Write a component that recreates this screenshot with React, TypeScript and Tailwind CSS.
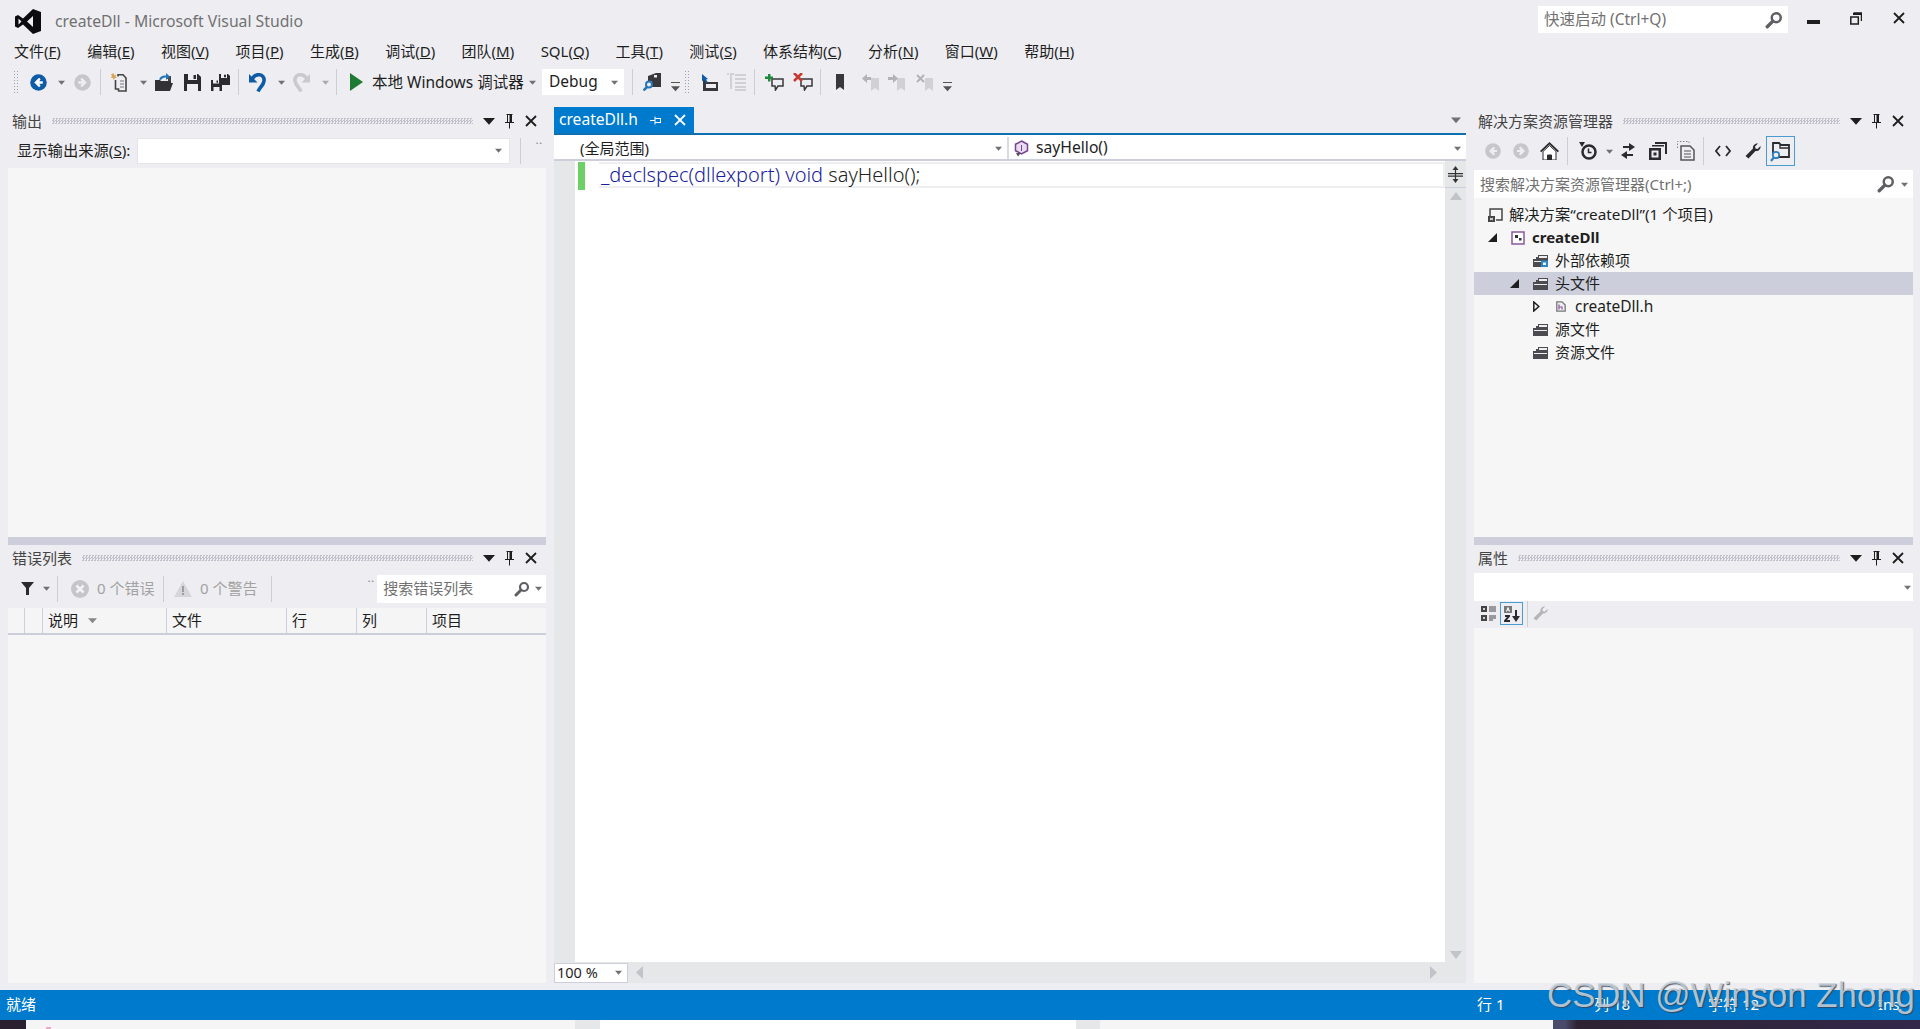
import React from "react";

const Tri = ({ className = "", color = "#717171", size = 7 }: { className?: string; color?: string; size?: number }) => (
  <svg className={className} width={size} height={size} viewBox="0 0 8 8">
    <path d="M0 2h8L4 6.500z" fill={color} />
  </svg>
);

const Grip = ({ className = "" }: { className?: string }) => (
  <div className={`bg-[radial-gradient(circle,#a0a0ac_0.8px,transparent_1px)] bg-size-[3px_3px] ${className}`} />
);

const HeaderGrip = ({ className = "" }: { className?: string }) => (
  <div className={`bg-[conic-gradient(#c0c0ca_25%,transparent_0_50%,#c0c0ca_0_75%,transparent_0)] bg-size-[3px_3px] ${className}`} />
);

const Sep = ({ className = "" }: { className?: string }) => <div className={`w-px h-[26px] bg-[#ccced4] shrink-0 ${className}`} />;

const Overflow = ({ className = "" }: { className?: string }) => (
  <div className={`mt-[10px] w-[9px] flex flex-col items-center gap-[1px] ${className}`}>
    <div className="w-[9px] h-px bg-[#555]" />
    <Tri size={9} color="#555" />
  </div>
);

const Arrow = ({ dir, off, size = 17, className = "" }: { dir: "l" | "r"; off?: boolean; size?: number; className?: string }) => (
  <svg className={className} width={size} height={size} viewBox="0 0 16 16">
    <circle cx="8" cy="8" r="7.800" fill={off ? "#c6c6cb" : "#0e5ba6"} />
    {dir === "l" ? (
      <path d="M8.500 3.500 4 8l4.500 4.500 1.500-1.500L8.700 9.100H12V6.900H8.700L10 5z" fill={off ? "#eeeef2" : "#fff"} />
    ) : (
      <path d="M7.500 3.500 12 8l-4.500 4.500L6 11l1.300-1.900H4V6.900h3.300L6 5z" fill={off ? "#eeeef2" : "#fff"} />
    )}
  </svg>
);

const Mag = ({ className = "", color = "#5f5f63", size = 18 }: { className?: string; color?: string; size?: number }) => (
  <svg className={className} width={size} height={size} viewBox="0 0 16 16">
    <circle cx="10" cy="6" r="4" fill="none" stroke={color} strokeWidth="2.200" />
    <path d="M7 9 2 14" stroke={color} strokeWidth="3" strokeLinecap="round" />
  </svg>
);

const Pin = ({ className = "" }: { className?: string }) => (
  <svg className={className} width="11" height="16" viewBox="0 0 11 16">
    <path d="M2.500 1h6v1H8v7h2v1H1V9h2V2h-.5zM4 2v7h1.500V2zM5 10h1v5.500H5z" fill="#1e1e1e" />
  </svg>
);

const Close = ({ className = "", color = "#1e1e1e", size = 12 }: { className?: string; color?: string; size?: number }) => (
  <svg className={className} width={size} height={size} viewBox="0 0 12 12">
    <path d="M1 1l10 10M11 1 1 11" stroke={color} strokeWidth="1.800" />
  </svg>
);

const Folder = ({ badge }: { badge?: boolean }) => (
  <svg width="16" height="14" viewBox="0 0 16 14" className="shrink-0">
    <path d="M0 5h3V3h2V1h10v12H0z" fill="#4b4b50" />
    <path d="M1 7h13v1H1zM6 2h8v2H6z" fill="#eeeef2" />
    {badge && <path d="M8 6.500h7V13H8z" fill="#2f86c4" />}
    {badge && <path d="M10 8.500h3V11h-3z" fill="#e8f3fb" />}
  </svg>
);

const GrayBookmark = ({ kind, className = "" }: { kind: "prev" | "next" | "clear"; className?: string }) => (
  <svg className={className} width="18" height="17" viewBox="0 0 18 17">
    <path d="M9 4h8v13l-4-3-4 3z" fill="#d0d0d5" />
    {kind === "prev" && <path d="M5 0 0 4.500 5 9V6h4V3H5z" fill="#b2b2b8" />}
    {kind === "next" && <path d="M5 0l5 4.500L5 9V6H0V3h5z" fill="#b2b2b8" />}
    {kind === "clear" && <path d="M1 1l7 7M8 1 1 8" stroke="#b2b2b8" strokeWidth="2" />}
  </svg>
);

function PanelHeader({ title, className = "" }: { title: string; className?: string }) {
  return (
    <div className={`h-[28px] flex items-center shrink-0 ${className}`}>
      <span className="ml-[4px] text-[15px] text-[#444] leading-none">{title}</span>
      <HeaderGrip className="flex-1 h-[6px] ml-[10px]" />
      <Tri className="ml-[10px]" color="#1e1e1e" size={12} />
      <Pin className="ml-[9px]" />
      <Close className="ml-[10px] mr-[9px]" />
    </div>
  );
}

const menus: [string, string][] = [
  ["文件", "F"],
  ["编辑", "E"],
  ["视图", "V"],
  ["项目", "P"],
  ["生成", "B"],
  ["调试", "D"],
  ["团队", "M"],
  ["SQL", "Q"],
  ["工具", "T"],
  ["测试", "S"],
  ["体系结构", "C"],
  ["分析", "N"],
  ["窗口", "W"],
  ["帮助", "H"],
];

function TitleBar() {
  return (
    <div className="h-[40px] flex items-start shrink-0">
      <svg className="ml-[15px] mt-[9px]" width="26" height="25" viewBox="0 0 26 25">
        <path
          fillRule="evenodd"
          d="M18 0 26 3v19l-8 3L8 15.500 3 19 0 17.500v-10L3 6l5 3.500zM18 7l-6 5.500 6 5.500zM3.500 9.500v6l3-3z"
          fill="#0c0c10"
        />
      </svg>
      <span className="ml-[14px] mt-[11px] text-[15.750px] leading-[20px] text-[#717171]">createDll - Microsoft Visual Studio</span>
      <div className="ml-auto mt-[6px] w-[250px] h-[27px] bg-white flex items-center px-[6px] justify-between">
        <span className="text-[15.500px] text-[#717171]">快速启动 (Ctrl+Q)</span>
        <Mag className="-mr-[1px]" />
      </div>
      <svg className="ml-[19px] mt-[20px]" width="13" height="4"><rect width="13" height="4" fill="#1e1e1e" /></svg>
      <svg className="ml-[30px] mt-[12px]" width="12" height="13" viewBox="0 0 12 13">
        <path d="M3.500 1h8v8" fill="none" stroke="#1e1e1e" strokeWidth="1.500" />
        <path d="M3 1h8.500v2H3z" fill="#1e1e1e" />
        <path d="M.8 5h7.500v7H.8z" fill="none" stroke="#1e1e1e" strokeWidth="1.500" />
      </svg>
      <Close className="ml-[31px] mt-[12px] mr-[15px]" />
    </div>
  );
}

function MenuBar() {
  return (
    <div className="h-[24px] pb-[2px] flex items-center gap-[26.400px] pl-[14px] shrink-0 text-[15px] text-[#1e1e1e]">
      {menus.map(([label, key]) => (
        <span key={label} className="whitespace-nowrap">
          {label}(<span className="underline">{key}</span>)
        </span>
      ))}
    </div>
  );
}

function MainToolbar() {
  return (
    <div className="h-[43px] pb-[7px] flex items-center shrink-0">
      <Grip className="ml-[13px] w-[7px] h-[24px]" />
      <Arrow dir="l" className="ml-[10px]" />
      <Tri className="ml-[11px]" />
      <Arrow dir="r" off className="ml-[9px]" />
      <Sep className="ml-[9px]" />
      {/* new project */}
      <svg className="ml-[9px]" width="17" height="19" viewBox="0 0 17 19">
        <path d="M7 2h6l4 4v13H7v-3H4V6h3z" fill="#eeeef2" />
        <path d="M8 3.500V1.700h5L16 5v13H8.500M5.500 7v9h3v2.500" fill="none" stroke="#444" strokeWidth="1.600" />
        <path d="M3.500 0l.8 2.200L6.500 1.500 5.500 3.500 7 5 5 5.200 3.500 7 3 5 .5 5 2 3.500 1 1.500z" fill="#d9a75b" />
        <path d="M10 8h4M10 11h4M10 14h4" stroke="#777" />
      </svg>
      <Tri className="ml-[13px]" />
      {/* open */}
      <svg className="ml-[8px]" width="18" height="18" viewBox="0 0 18 18">
        <path d="M0 7h5l1 1h10v2h2l-3 8H0z" fill="#323236" />
        <path d="M12 3h4v5h-3v-2h-1z" fill="#444" />
        <path d="M4 6.500C5 3 8 2 11 2.500V0l4 3.500-4 3.500V4.500C9 4.200 7 5 6 7z" fill="#2677b8" />
      </svg>
      {/* save */}
      <svg className="ml-[11px]" width="17" height="17" viewBox="0 0 17 17">
        <path d="M0 0h14l3 3v14H0z" fill="#2b2b2f" />
        <path d="M4 0h9v6H4zM3 10h11v7H3z" fill="#eeeef2" />
        <path d="M9.500 1h2.500v4H9.500z" fill="#2b2b2f" />
      </svg>
      {/* save all */}
      <svg className="ml-[10px]" width="19" height="17" viewBox="0 0 19 17">
        <path d="M8 0h9l2 2v9H8z" fill="#2b2b2f" />
        <path d="M0 6h9l2 2v9H0z" fill="#2b2b2f" />
        <path d="M10 0h6v4h-6zM2 6h6v3.500H2zM2.500 13h6v4h-6z" fill="#eeeef2" />
        <path d="M13 .7h2v2.600h-2zM5.500 6.500h1.500v2.300H5.500z" fill="#2b2b2f" />
      </svg>
      <Sep className="ml-[8px]" />
      {/* undo */}
      <svg className="ml-[10px]" width="17" height="19" viewBox="0 0 17 19">
        <path d="M3 6.500C6-.5 16 .5 15 8c-.6 4.500-4 6-6 10.500" fill="none" stroke="#0e5ba6" strokeWidth="3.600" />
        <path d="M0 1v8.500h8.500z" fill="#0e5ba6" />
      </svg>
      <Tri className="ml-[12px]" />
      {/* redo */}
      <svg className="ml-[8px]" width="17" height="19" viewBox="0 0 17 19">
        <path d="M14 6.500C11-.5 1 .5 2 8c.6 4.500 4 6 6 10.500" fill="none" stroke="#c9c9ce" strokeWidth="3.600" />
        <path d="M17 1v8.500H8.500z" fill="#c9c9ce" />
      </svg>
      <Tri className="ml-[12px]" color="#a8a8ae" />
      <Sep className="ml-[7px]" />
      <svg className="ml-[13px]" width="13" height="18" viewBox="0 0 13 18"><path d="M0 0l13 9-13 9z" fill="#1f7a34" /></svg>
      <span className="ml-[9px] pt-[1px] w-[152px] text-[15.500px] text-[#1e1e1e] whitespace-nowrap">本地 Windows 调试器</span>
      <Tri className="ml-[5px]" />
      <div className="ml-[6px] w-[82px] h-[26px] bg-white flex items-center justify-between pl-[7px] pr-[6px] shrink-0">
        <span className="text-[15.500px] text-[#1e1e1e]">Debug</span>
        <Tri />
      </div>
      <Sep className="ml-[8px]" />
      {/* find in files style */}
      <svg className="ml-[10px]" width="18" height="18" viewBox="0 0 18 18">
        <path d="M5 5V3l8-3h5v14H9V8H5z" fill="#38383c" />
        <path d="M11 2h3v2.500h-3z" fill="#eeeef2" />
        <circle cx="6" cy="11.500" r="3" fill="#eeeef2" stroke="#2677b8" strokeWidth="2" />
        <path d="M4 14l-3.500 3.500" stroke="#2677b8" strokeWidth="2.500" />
      </svg>
      <Overflow className="ml-[10px]" />
      <Grip className="ml-[4px] w-[7px] h-[24px]" />
      <svg className="ml-[9px]" width="18" height="17" viewBox="0 0 18 17">
        <path d="M3 5h3v3h12v9H3z" fill="#38383c" />
        <path d="M6 10h10v4H6z" fill="#eeeef2" />
        <path d="M2 0l6 5-2 .5 2 3-2 .5-1.500-3L2 7z" fill="#0e5ba6" />
      </svg>
      <svg className="ml-[9px]" width="19" height="18" viewBox="0 0 19 18">
        <path d="M0 0h2v2H0zM3 0h4v2H3zM3 2h2v14H3zM8 1h11v2H8zM8 5h11v2H8zM8 9h11v2H8zM8 13h11v2H8zM8 16h11v2H8z" fill="#d0d0d5" />
      </svg>
      <Sep className="ml-[8px]" />
      {/* add comment */}
      <svg className="ml-[10px]" width="19" height="17" viewBox="0 0 19 17">
        <path d="M7 5h11v7h-5l-2.500 4-.5-4H7z" fill="none" stroke="#38383c" strokeWidth="1.500" />
        <path d="M3 0h2.500v2.500H8V5H5.500v2.500H3V5H0V2.500h3z" fill="#1f8a3c" />
      </svg>
      <svg className="ml-[9px]" width="20" height="18" viewBox="0 0 20 18">
        <path d="M8 6h11v7h-5l-2.500 4-.5-4H8z" fill="none" stroke="#38383c" strokeWidth="1.500" />
        <path d="M1 0l8 8M9 0 1 8" stroke="#c43a31" strokeWidth="2.500" />
      </svg>
      <Sep className="ml-[7px]" />
      <svg className="ml-[15px]" width="8" height="16" viewBox="0 0 8 16"><path d="M0 0h8v16l-4-3-4 3z" fill="#38383c" /></svg>
      <GrayBookmark kind="prev" className="ml-[18px]" />
      <GrayBookmark kind="next" className="ml-[8px]" />
      <GrayBookmark kind="clear" className="ml-[10px]" />
      <Overflow className="ml-[9px]" />
    </div>
  );
}

function LeftColumn() {
  return (
    <div className="w-[538px] ml-[8px] flex flex-col shrink-0">
      <PanelHeader title="输出" />
      <div className="h-[33px] pb-[2px] flex items-center shrink-0">
        <span className="ml-[9px] w-[120px] text-[15.300px] text-[#1e1e1e] whitespace-nowrap">
          显示输出来源(<span className="underline">S</span>):
        </span>
        <div className="w-[373px] h-[26px] bg-white border border-[#e4e4ea] flex items-center justify-end pr-[7px]">
          <Tri />
        </div>
        <Sep className="ml-[10px] h-[22px]" />
        <div className="ml-[15px] mb-[14px] text-[7px] leading-none text-[#888] tracking-[1px]">‣‣</div>
      </div>
      <div className="h-[369px] bg-[#f6f6f6] shrink-0" />
      <div className="h-[8px] bg-[#cccedb] shrink-0" />
      <PanelHeader title="错误列表" className="pb-[2px]" />
      <div className="h-[35px] pb-[4px] flex items-center shrink-0">
        <svg className="ml-[13px]" width="13" height="13" viewBox="0 0 13 13"><path d="M0 0h13L8 6v7H5V6z" fill="#2b2b2f" /></svg>
        <Tri className="ml-[9px]" />
        <Sep className="ml-[7px]" />
        <svg className="ml-[13px]" width="18" height="18" viewBox="0 0 18 18">
          <circle cx="9" cy="9" r="9" fill="#c5c5ca" />
          <path d="M5.500 5.500l7 7M12.500 5.500l-7 7" stroke="#f4f4f6" strokeWidth="2.500" />
        </svg>
        <span className="ml-[8px] text-[15px] text-[#a2a2a2] whitespace-nowrap w-[60px]">0 个错误</span>
        <Sep className="ml-[6px]" />
        <svg className="ml-[10px]" width="18" height="16" viewBox="0 0 18 16">
          <path d="M9 0l9 16H0z" fill="#d5d5da" />
          <path d="M8 5h2v6H8zM8 12h2v2H8z" fill="#9c9ca2" />
        </svg>
        <span className="ml-[8px] text-[15px] text-[#a2a2a2] whitespace-nowrap w-[60px]">0 个警告</span>
        <Sep className="ml-[11px]" />
        <div className="ml-[96px] mb-[14px] text-[7px] leading-none text-[#888] tracking-[1px]">‣‣</div>
        <div className="ml-[2px] flex-1 h-[28px] bg-white flex items-center pl-[6px] pr-[4px]">
          <span className="text-[15px] text-[#717171]">搜索错误列表</span>
          <Mag className="ml-auto" size={16} />
          <Tri className="ml-[5px]" />
        </div>
      </div>
      <div className="h-[27px] flex bg-[#f5f5f5] border-b-2 border-[#cccedb] shrink-0 text-[15px] text-[#1e1e1e] items-stretch">
        <div className="w-[17px] border-r border-[#cccedb]" />
        <div className="w-[18px] border-r border-[#cccedb]" />
        <div className="w-[124px] border-r border-[#cccedb] pl-[5px] flex items-center gap-[10px]">
          说明 <Tri color="#888" size={9} />
        </div>
        <div className="w-[120px] border-r border-[#cccedb] pl-[5px] flex items-center">文件</div>
        <div className="w-[70px] border-r border-[#cccedb] pl-[5px] flex items-center">行</div>
        <div className="w-[70px] border-r border-[#cccedb] pl-[5px] flex items-center">列</div>
        <div className="flex-1 pl-[5px] flex items-center">项目</div>
      </div>
      <div className="flex-1 bg-[#f6f6f6]" />
    </div>
  );
}

function Editor() {
  return (
    <div className="w-[912px] ml-[8px] flex flex-col shrink-0">
      <div className="h-[26px] flex items-stretch shrink-0">
        <div className="w-[140px] bg-[#007acc] flex items-center text-white pl-[5px]">
          <span className="text-[15.600px]">createDll.h</span>
          <svg className="ml-[12px]" width="12" height="11" viewBox="0 0 12 11">
            <path d="M0 5h4.500v1H0zM4.500 1.500h1V3H11v5H5.500v1.500h-1zM5.500 4v3h4.500V4z" fill="#fff" />
          </svg>
          <Close className="ml-[12px]" color="#fff" />
        </div>
        <Tri className="ml-auto mr-[5px] self-center" size={10} />
      </div>
      <div className="h-[2px] bg-[#0e70b0] shrink-0" />
      <div className="h-[26px] pt-[2px] flex bg-white border-b-2 border-[#cccedb] shrink-0 text-[15px] text-[#1e1e1e]">
        <div className="w-[455px] border-r-2 border-[#d8dae4] flex items-center pl-[26px] pr-[5px]">
          <span>(全局范围)</span>
          <Tri className="ml-auto" />
        </div>
        <div className="flex-1 flex items-center pl-[5px] pr-[5px]">
          <svg width="15" height="17" viewBox="0 0 15 17">
            <path d="M7.500 1l6 3.300v6.400l-6 3.300-6-3.300V4.300z" fill="#e9dcf1" stroke="#75438f" strokeWidth="1.500" />
            <path d="M7.500 5v6" stroke="#75438f" />
            <path d="M2 13h4v1l-2 2.500z" fill="#555" />
          </svg>
          <span className="ml-[7px] text-[15.700px]">sayHello()</span>
          <Tri className="ml-auto" />
        </div>
      </div>
      <div className="flex-1 flex min-h-0">
        <div className="w-[21px] bg-[#e6e7e8]" />
        <div className="flex-1 bg-white pt-px">
          <div className="flex items-start">
            <div className="ml-[3px] w-[7px] h-[28px] bg-[#6fd068] shrink-0" />
            <div className="ml-[14px] flex-1 h-[26px] border-2 border-l-0 border-[#eeeef2] flex items-center pl-[2px]">
              <span className="text-[20px] leading-none font-light text-[#1c1ca0]">
                _declspec(dllexport) void <span className="text-[#222]">sayHello();</span>
              </span>
            </div>
          </div>
        </div>
        <div className="w-[21px] bg-[#e6e7e8] flex flex-col items-center">
          <div className="w-full h-[27px] border-b border-[#cccedb] flex items-center justify-center">
            <svg width="15" height="17" viewBox="0 0 15 17">
              <path d="M7.500 0 10.500 4h-6zM7.500 17l-3-4h6zM6.900 3h1.200v11H6.900zM0 7h15v1.200H0zM0 9.500h15v1.200H0z" fill="#333" />
            </svg>
          </div>
          <svg className="mt-[4px]" width="12" height="8" viewBox="0 0 12 8"><path d="M6 0l6 8H0z" fill="#c2c3c9" /></svg>
          <svg className="mt-auto mb-[3px]" width="12" height="8" viewBox="0 0 12 8"><path d="M6 8l6-8H0z" fill="#c2c3c9" /></svg>
        </div>
      </div>
      <div className="h-[21px] flex items-center bg-[#e6e7e8] shrink-0">
        <div className="w-[74px] h-[20px] bg-white border border-[#cccedb] flex items-center justify-between pl-[2px] pr-[5px] text-[14.500px] text-[#1e1e1e]">
          100 %
          <Tri />
        </div>
        <svg className="ml-[8px]" width="7" height="13" viewBox="0 0 7 13"><path d="M0 6.500 7 0v13z" fill="#c2c3c9" /></svg>
        <svg className="ml-auto mr-[29px]" width="7" height="13" viewBox="0 0 7 13"><path d="M7 6.500 0 0v13z" fill="#c2c3c9" /></svg>
      </div>
    </div>
  );
}

function TreeRow({ indent, selected, arrow, icon, bold, children }: { indent: string; selected?: boolean; arrow?: "open" | "closed"; icon?: React.ReactNode; bold?: boolean; children: React.ReactNode }) {
  return (
    <div className={`h-[23px] flex items-center text-[15px] text-[#1e1e1e] ${selected ? "bg-[#cccedb]" : ""}`}>
      <div className={`${indent} ${arrow ? "w-[23px]" : ""} flex items-center shrink-0`}>
        {arrow === "open" && (
          <svg width="9" height="9" viewBox="0 0 9 9"><path d="M9 0v9H0z" fill="#1e1e1e" /></svg>
        )}
        {arrow === "closed" && (
          <svg width="7" height="11" viewBox="0 0 7 11"><path d="M.8 1v9l5-4.500z" fill="none" stroke="#1e1e1e" strokeWidth="1.500" /></svg>
        )}
      </div>
      {icon}
      <span className={`ml-[6px] whitespace-nowrap ${bold ? "font-bold" : ""}`}>{children}</span>
    </div>
  );
}

function RightColumn() {
  return (
    <div className="w-[439px] ml-[8px] flex flex-col shrink-0">
      <PanelHeader title="解决方案资源管理器" />
      <div className="h-[35px] pb-[3px] flex items-center shrink-0">
        <Arrow dir="l" off size={16} className="ml-[11px]" />
        <Arrow dir="r" off size={16} className="ml-[12px]" />
        <svg className="ml-[11px]" width="19" height="18" viewBox="0 0 19 18">
          <path d="M9.500 0 19 9l-1.300 1.300L9.500 2.500 1.300 10.300 0 9z" fill="#2b2b2f" />
          <path d="M3 9.500 9.500 3.500l6.500 6V18h-4.500v-5h-4v5H3z" fill="#fff" stroke="#2b2b2f" strokeWidth="1" />
          <path d="M7.500 13h4v5h-4z" fill="#2b2b2f" />
        </svg>
        <Sep className="ml-[8px] h-[28px]" />
        <svg className="ml-[11px]" width="18" height="18" viewBox="0 0 18 18">
          <circle cx="10" cy="10" r="6.500" fill="none" stroke="#2b2b2f" strokeWidth="2.500" />
          <path d="M9.500 6.500v4h3" fill="none" stroke="#2b2b2f" strokeWidth="1.500" />
          <path d="M0 0h6L3 5z" fill="#2b2b2f" />
        </svg>
        <Tri className="ml-[9px]" />
        <svg className="ml-[7px]" width="16" height="16" viewBox="0 0 16 16">
          <path d="M9 0l6 4-6 4V5H3V3h6zM7 8v3h6v2H7v3l-6-4z" fill="#2b2b2f" />
        </svg>
        <svg className="ml-[13px]" width="18" height="18" viewBox="0 0 18 18">
          <path d="M6 0h12v12h-2V2H6z" fill="#2b2b2f" />
          <path d="M3 3h12v1.500H3z" fill="#2b2b2f" />
          <path d="M0 6h12v12H0z" fill="#2b2b2f" />
          <path d="M2.500 8.500h7v7h-7z" fill="#eeeef2" />
          <path d="M4.500 10.500h3v3h-3z" fill="#2b2b2f" />
        </svg>
        <svg className="ml-[10px]" width="18" height="20" viewBox="0 0 18 20">
          <path d="M.5 7V.5H12V3" fill="none" stroke="#888" strokeDasharray="1.500 1.500" />
          <path d="M4 5h9l4 4v10H4z" fill="#eeeef2" stroke="#555" strokeWidth="1.500" />
          <path d="M7 10h7M7 13h7M7 16h7" stroke="#555" />
        </svg>
        <Sep className="ml-[8px] h-[28px]" />
        <svg className="ml-[11px]" width="16" height="12" viewBox="0 0 16 12">
          <path d="M5 1 1 6l4 5M11 1l4 5-4 5" fill="none" stroke="#2b2b2f" strokeWidth="1.800" />
        </svg>
        <svg className="ml-[14px]" width="16" height="16" viewBox="0 0 16 16">
          <path d="M15.500 3c.5 3-2 5.500-5 5L3.500 15.500.5 13 8 5.500c-.5-3 2-5.500 5-5L10 3.500l.5 2 2 .5z" fill="#2b2b2f" />
        </svg>
        <div className="ml-[5px] w-[29px] h-[30px] border border-[#4a9ad4] flex items-center justify-center">
          <svg width="21" height="21" viewBox="0 0 21 21">
            <path d="M3 13V2h6l2 2h8v12H8" fill="none" stroke="#2b2b2f" strokeWidth="1.800" />
            <path d="M10 4v3h9" fill="none" stroke="#2b2b2f" strokeWidth="1.300" />
            <circle cx="6" cy="14" r="3.200" fill="none" stroke="#2c7fc0" strokeWidth="1.800" />
            <path d="M3.800 16.500 1 20" stroke="#2c7fc0" strokeWidth="2.200" />
          </svg>
        </div>
      </div>
      <div className="h-[28px] bg-white flex items-center pl-[6px] pr-[5px] shrink-0">
        <span className="text-[15px] text-[#717171]">搜索解决方案资源管理器(Ctrl+;)</span>
        <Mag className="ml-auto" />
        <Tri className="ml-[6px]" />
      </div>
      <div className="h-[339px] bg-[#f6f6f6] pt-[5px] shrink-0">
        <TreeRow
          indent="ml-[14px]"
          icon={
            <svg width="15" height="14" viewBox="0 0 15 14">
              <path d="M2 9V1h12v11H8" fill="none" stroke="#444" strokeWidth="1.500" />
              <path d="M0 8h7v6H0z" fill="#444" />
              <path d="M2 10l3 2M5 10l-3 2" stroke="#eee" />
            </svg>
          }
        >
          <span className="text-[15.300px]">解决方案“createDll”(1 个项目)</span>
        </TreeRow>
        <TreeRow
          indent="ml-[14px]"
          arrow="open"
          bold
          icon={
            <svg width="14" height="14" viewBox="0 0 14 14">
              <path d="M1 1h12v12H1z" fill="#fff" stroke="#8a5a9c" strokeWidth="1.500" />
              <path d="M4 4h3v3H4zM8 7h2.500v2.500H8z" fill="#333" />
            </svg>
          }
        >
          <span className="ml-[1px]">createDll</span>
        </TreeRow>
        <TreeRow indent="ml-[59px]" icon={<Folder badge />}>外部依赖项</TreeRow>
        <TreeRow indent="ml-[36px]" selected arrow="open" icon={<Folder />}>头文件</TreeRow>
        <TreeRow
          indent="ml-[59px]"
          arrow="closed"
          icon={
            <svg width="10" height="11" viewBox="0 0 10 11">
              <path d="M.8.800H6L9.200 4v6.200H.8z" fill="#eeeef2" stroke="#777" strokeWidth="1.300" />
              <path d="M3 3.500v5M3 6h3v2.500" fill="none" stroke="#8a5a9c" strokeWidth="1.200" />
            </svg>
          }
        >
          <span className="ml-[3px] text-[15.500px]">createDll.h</span>
        </TreeRow>
        <TreeRow indent="ml-[59px]" icon={<Folder />}>源文件</TreeRow>
        <TreeRow indent="ml-[59px]" icon={<Folder />}>资源文件</TreeRow>
      </div>
      <div className="h-[8px] bg-[#cccedb] shrink-0" />
      <PanelHeader title="属性" className="pb-[2px]" />
      <div className="h-[28px] bg-white flex items-center justify-end pr-[2px] shrink-0">
        <Tri />
      </div>
      <div className="h-[27px] pb-[2px] flex items-center shrink-0">
        <svg className="ml-[7px]" width="15" height="15" viewBox="0 0 15 15">
          <path d="M0 0h6v6H0zM0 9h6v6H0z" fill="#444" />
          <path d="M2 3h2M3 2v2M2 12h2M3 11v2" stroke="#fff" />
          <path d="M8 1h7M8 3h7M8 5h7M8 10h7M8 12h7M8 14h4" stroke="#444" />
        </svg>
        <div className="ml-[4px] w-[23px] h-[23px] border border-[#4a9ad4] flex items-center justify-center">
          <svg width="16" height="16" viewBox="0 0 16 16">
            <path d="M0 0h8v7H0z" fill="#777" />
            <path d="M2.500 5.500 4 1.500l1.500 4M3 4h2" fill="none" stroke="#fff" />
            <path d="M1 9h5v1.500L3 14h3v2H0v-1.500L3 11H1z" fill="#2b2b2f" />
            <path d="M11 4h2v6h3l-4 6-4-6h3z" fill="#2b2b2f" />
          </svg>
        </div>
        <Sep className="ml-[4px] h-[22px]" />
        <svg className="ml-[5px]" width="15" height="15" viewBox="0 0 16 16">
          <path d="M15.500 3c.5 3-2 5.500-5 5L3.500 15.500.5 13 8 5.500c-.5-3 2-5.500 5-5L10 3.500l.5 2 2 .5z" fill="#b4b4ba" />
        </svg>
      </div>
      <div className="flex-1 bg-[#f6f6f6]" />
    </div>
  );
}

export default function App() {
  return (
    <div className="relative w-[1920px] h-[1029px] overflow-hidden flex flex-col bg-[#eeeef2] font-['Noto_Sans','Noto_Sans_CJK_SC',sans-serif]">
      <TitleBar />
      <MenuBar />
      <MainToolbar />
      <div className="flex-1 flex pb-[7px] min-h-0">
        <LeftColumn />
        <Editor />
        <RightColumn />
      </div>
      <div className="h-[30px] pb-[2px] bg-[#007acc] flex items-center text-[15px] text-white shrink-0">
        <span className="ml-[6px]">就绪</span>
        <span className="ml-auto w-[117px]">行 1</span>
        <span className="w-[114px]">列 18</span>
        <span className="w-[170px]">字符 12</span>
        <span className="w-[42px]">Ins</span>
      </div>
      <div className="h-[9px] flex shrink-0">
        <div className="w-[26px] bg-[#2a2030]" />
        <div className="w-[549px] bg-[#f5f5f5] pl-[20px] pt-[7px]">
          <div className="w-[5px] h-[2px] bg-[#f0a8c8]" />
        </div>
        <div className="w-[25px] bg-[#e6e7e8]" />
        <div className="w-[476px] bg-white" />
        <div className="w-[24px] bg-[#e6e7e8]" />
        <div className="w-[453px] bg-[#f5f5f5]" />
        <div className="flex-1 bg-[linear-gradient(90deg,#4a4a6a_0,#4a4a6a_12px,#2e2332_24px,#33284a_100%)]" />
      </div>
      <span className="absolute left-[1547px] top-[973px] text-[34.800px] leading-[44px] font-['Liberation_Sans',sans-serif] text-[#ccd6df]/85 whitespace-nowrap [text-shadow:1px_1px_1px_rgba(50,65,85,0.85)]">
        CSDN @Winson Zhong
      </span>
    </div>
  );
}
